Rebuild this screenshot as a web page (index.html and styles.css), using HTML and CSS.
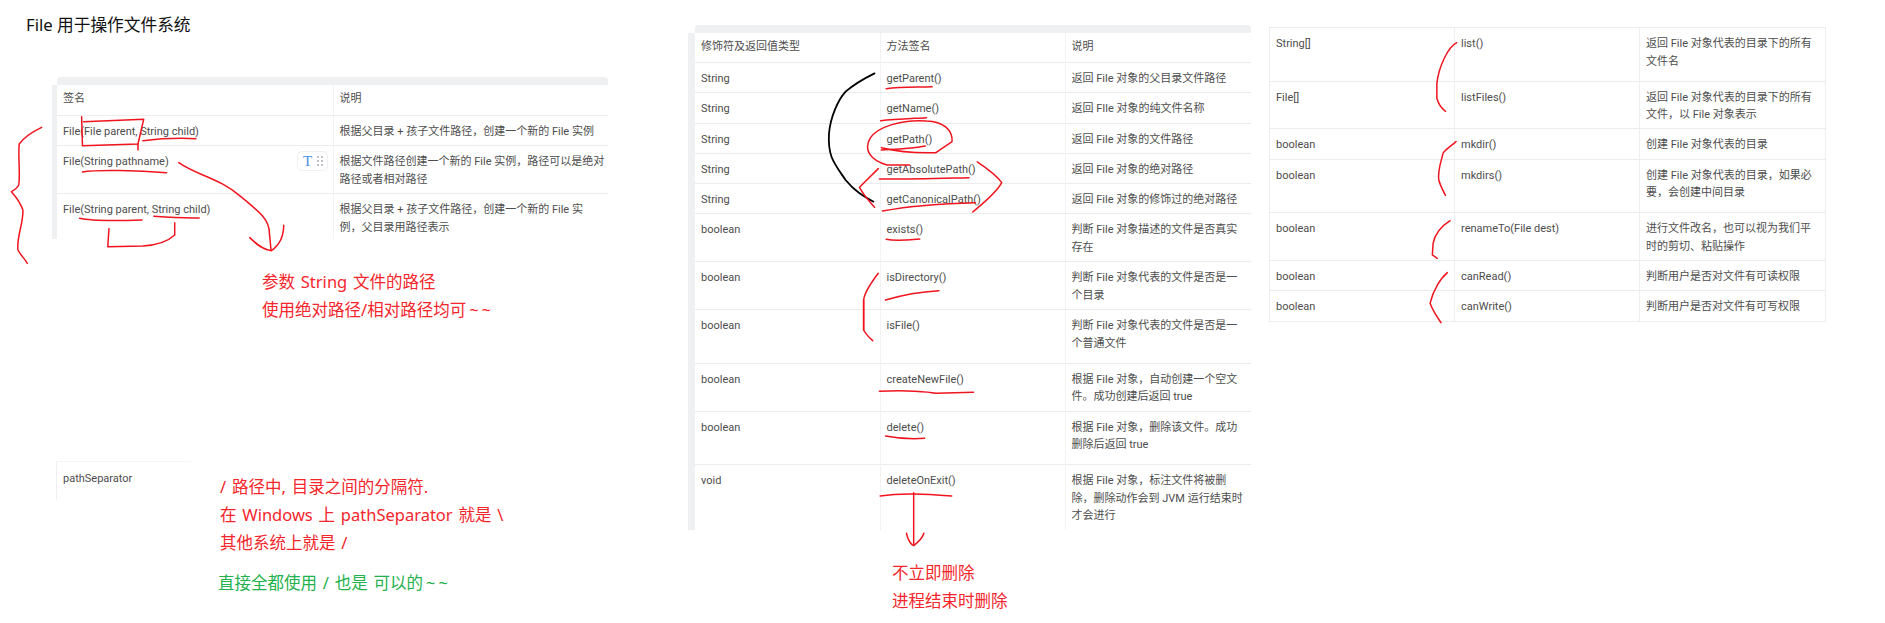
FILE: index.html
```html
<!DOCTYPE html>
<html lang="zh-CN">
<head>
<meta charset="utf-8">
<title>File 用于操作文件系统</title>
<link rel="stylesheet" href="styles.css">
</head>
<body>
<main class="canvas">
  <h1 class="title">File 用于操作文件系统</h1>

  <section class="sheet sheet-ctor">
    <div class="sheet-top"></div>
    <div class="sheet-body">
      <div class="gutter"></div>
      <table class="grid">
        <colgroup><col class="c-276"><col></colgroup>
        <tr class="r-head"><td>签名</td><td>说明</td></tr>
        <tr><td>File(File parent, String child)</td><td>根据父目录 + 孩子文件路径&#xFF0C;创建一个新的 File 实例</td></tr>
        <tr><td>File(String pathname)</td><td>根据文件路径创建一个新的 File 实例&#xFF0C;路径可以是绝对<br>路径或者相对路径</td></tr>
        <tr><td>File(String parent, String child)</td><td>根据父目录 + 孩子文件路径&#xFF0C;创建一个新的 File 实<br>例&#xFF0C;父目录用路径表示</td></tr>
      </table>
    </div>
  </section>

  <div class="block-tool">
    <span class="block-t">T</span>
    <svg class="block-drag" width="6" height="10" viewBox="0 0 6 10"><g fill="#bfc3c9"><rect x="0" y="0" width="2" height="2"/><rect x="4" y="0" width="2" height="2"/><rect x="0" y="4" width="2" height="2"/><rect x="4" y="4" width="2" height="2"/><rect x="0" y="8" width="2" height="2"/><rect x="4" y="8" width="2" height="2"/></g></svg>
  </div>

  <section class="field-snip">pathSeparator</section>

  <section class="sheet sheet-methods">
    <div class="sheet-top"></div>
    <div class="sheet-body">
      <div class="gutter"></div>
      <table class="grid">
        <colgroup><col class="c-185"><col class="c-185"><col></colgroup>
        <tr class="r-head"><td>修饰符及返回值类型</td><td>方法签名</td><td>说明</td></tr>
        <tr><td>String</td><td>getParent()</td><td>返回 File 对象的父目录文件路径</td></tr>
        <tr><td>String</td><td>getName()</td><td>返回 FIle 对象的纯文件名称</td></tr>
        <tr><td>String</td><td>getPath()</td><td>返回 File 对象的文件路径</td></tr>
        <tr><td>String</td><td>getAbsolutePath()</td><td>返回 File 对象的绝对路径</td></tr>
        <tr><td>String</td><td>getCanonicalPath()</td><td>返回 File 对象的修饰过的绝对路径</td></tr>
        <tr><td>boolean</td><td>exists()</td><td>判断 File 对象描述的文件是否真实<br>存在</td></tr>
        <tr><td>boolean</td><td>isDirectory()</td><td>判断 File 对象代表的文件是否是一<br>个目录</td></tr>
        <tr class="r-tall"><td>boolean</td><td>isFile()</td><td>判断 File 对象代表的文件是否是一<br>个普通文件</td></tr>
        <tr><td>boolean</td><td>createNewFile()</td><td>根据 File 对象&#xFF0C;自动创建一个空文<br>件。成功创建后返回 true</td></tr>
        <tr class="r-tall"><td>boolean</td><td>delete()</td><td>根据 File 对象&#xFF0C;删除该文件。成功<br>删除后返回 true</td></tr>
        <tr><td>void</td><td>deleteOnExit()</td><td>根据 File 对象&#xFF0C;标注文件将被删<br>除&#xFF0C;删除动作会到 JVM 运行结束时<br>才会进行</td></tr>
      </table>
    </div>
  </section>

  <section class="sheet-list">
    <table class="grid grid-closed">
      <colgroup><col class="c-185"><col class="c-185"><col></colgroup>
      <tr class="r-tall"><td>String[]</td><td>list()</td><td>返回 File 对象代表的目录下的所有<br>文件名</td></tr>
      <tr><td>File[]</td><td>listFiles()</td><td>返回 File 对象代表的目录下的所有<br>文件&#xFF0C;以 File 对象表示</td></tr>
      <tr><td>boolean</td><td>mkdir()</td><td>创建 File 对象代表的目录</td></tr>
      <tr class="r-tall"><td>boolean</td><td>mkdirs()</td><td>创建 File 对象代表的目录&#xFF0C;如果必<br>要&#xFF0C;会创建中间目录</td></tr>
      <tr><td>boolean</td><td>renameTo(File dest)</td><td>进行文件改名&#xFF0C;也可以视为我们平<br>时的剪切、粘贴操作</td></tr>
      <tr><td>boolean</td><td>canRead()</td><td>判断用户是否对文件有可读权限</td></tr>
      <tr><td>boolean</td><td>canWrite()</td><td>判断用户是否对文件有可写权限</td></tr>
    </table>
  </section>

  <svg class="ink" width="1885" height="623" viewBox="0 0 1885 623" aria-hidden="true">
    <g transform="scale(.4082 .3333)">
      <path d="M200,350 L202,437 L338,432 L352,358 L205,365"/>
      <path d="M338,432 L338,450"/>
      <path d="M350,422 C390,416 440,414 480,416"/>
      <path d="M102,382 C80,395 60,410 47,432 C44,470 50,520 46,555 C42,565 35,570 28,575 C35,585 50,605 56,630 C58,670 40,710 44,750 C50,765 60,775 67,790"/>
      <path d="M202,516 C240,508 340,512 408,518"/>
      <path d="M438,488 C480,525 540,535 590,590 C640,640 660,660 660,700 L664,750"/>
      <path d="M612,713 C630,735 645,750 665,752 C685,735 695,710 695,676"/>
      <path d="M195,655 C230,665 300,662 348,660"/>
      <path d="M377,649 C410,652 450,655 488,654"/>
      <path d="M267,686 L264,740 L350,738 C390,735 415,720 428,705 L428,668"/>
    </g>
    <g transform="translate(680 10) scale(.3763 .3333)">
      <path class="ink-black" d="M517,190 C490,205 460,225 440,245 C420,270 400,320 396,370 C392,440 410,460 440,510 C465,545 490,560 514,575"/>
      <path d="M548,236 C590,228 630,232 670,230"/>
      <path d="M533,332 C570,328 610,326 655,323"/>
      <path d="M535,413 C580,425 630,430 680,428 L723,395 C725,360 700,335 655,333 C590,328 525,350 505,385 C488,420 505,450 550,465 L610,465"/>
      <path d="M535,420 C570,418 620,415 652,408"/>
      <path d="M530,507 C600,508 690,505 768,503"/>
      <path d="M527,476 L477,532 C490,560 505,575 517,592"/>
      <path d="M790,456 C815,475 840,495 855,518 C840,550 800,585 778,606"/>
      <path d="M538,603 C600,590 700,580 785,578"/>
      <path d="M548,688 C575,695 610,690 637,687"/>
      <path d="M527,790 C510,815 490,850 488,870 L488,960"/>
      <path d="M546,870 C590,855 640,845 688,842"/>
    </g>
    <g transform="translate(680 300) scale(.3763 .3333)">
      <path d="M488,0 L488,90 C495,105 505,115 512,122"/>
      <path d="M530,274 C600,270 660,275 680,280 L780,277"/>
      <path d="M546,408 C580,415 620,418 650,415"/>
      <path d="M532,588 C590,578 650,582 722,588"/>
      <path d="M621,578 L621,735"/>
      <path d="M602,700 C605,720 615,735 621,737 C635,725 645,712 648,700"/>
    </g>
    <g transform="translate(1260 10) scale(.3763 .3333)">
      <path d="M523,98 C500,110 475,170 470,220 L470,265 C475,285 485,298 493,304"/>
      <path d="M521,395 C505,410 495,418 487,428 C480,460 472,480 475,510 C480,530 488,545 493,556"/>
      <path d="M505,632 C480,650 465,670 460,700 L458,735 L471,745"/>
      <path d="M498,788 C480,805 460,840 452,880 C460,905 470,920 481,938"/>
    </g>
  </svg>

  <p class="note note-param">参数 String 文件的路径<br>使用绝对路径/相对路径均可<span class="tilde">~~</span></p>
  <p class="note note-sep">/ 路径中, 目录之间的分隔符.<br>在 Windows 上 pathSeparator 就是 \<br>其他系统上就是 /</p>
  <p class="note note-green">直接全都使用 / 也是 可以的<span class="tilde">~~</span></p>
  <p class="note note-exit">不立即删除<br>进程结束时删除</p>
</main>
</body>
</html>
```
FILE: styles.css
```css
* { box-sizing: border-box; }
html, body { margin: 0; padding: 0; background: #fff; }
body {
  font-family: "Noto Sans", "Noto Sans CJK SC", sans-serif;
  overflow: hidden;
}
.canvas {
  position: relative;
  width: 1885px;
  height: 623px;
  overflow: hidden;
}
.title {
  position: absolute;
  left: 26px;
  top: 13px;
  margin: 0;
  font-size: 16.7px;
  line-height: 24px;
  font-weight: 400;
  color: #111;
}

/* pasted screenshots of the doc tables */
.sheet { position: absolute; display: flex; flex-direction: column; overflow: hidden; }
.sheet-ctor { left: 52px; top: 77px; width: 556px; height: 162px; }
.sheet-methods { left: 688px; top: 25px; width: 563px; height: 505px; }
.sheet-list { position: absolute; left: 1269px; top: 25px; width: 557px; }
.sheet-top {
  flex: none;
  height: 8px;
  margin-left: 5px;
  background: #eef0f1;
  border-radius: 4px 4px 0 0;
}
.sheet-methods .sheet-top { margin-left: 7px; }
.sheet-body { flex: 1; display: flex; min-height: 0; }
.gutter { flex: none; width: 5px; background: #eef0f1; }
.sheet-methods .gutter { width: 7px; }

.grid {
  width: 100%;
  flex: 1;
  align-self: flex-start;
  border-collapse: collapse;
  table-layout: fixed;
  font-family: Roboto, "Noto Sans CJK SC", sans-serif;
  font-size: 11px;
  line-height: 17.6px;
  color: #4d4d4d;
}
.grid td {
  padding: 7px 6px 4.7px;
  vertical-align: top;
  border-left: 1px solid #f3f3f3;
  border-top: 1px solid #ececec;
  white-space: nowrap;
}
.grid td:first-child { border-left: 0; }
.grid .r-head td { border-top: 0; padding: 5px 6px 6.4px; }
.sheet-ctor .grid .r-head td { padding-bottom: 7.4px; }
.grid .r-tall td { padding-bottom: 10.4px; }
.c-276 { width: 276px; }
.c-185 { width: 185px; }
.grid-closed { margin-top: 2px; border: 1px solid #eeeeee; }
.grid-closed td { border-left-color: #eeeeee; }

.field-snip {
  position: absolute;
  left: 56px;
  top: 461px;
  width: 135px;
  height: 39px;
  padding: 8px 6px 0;
  border-left: 1px solid #f0f0f0;
  border-top: 1px solid #f5f5f5;
  font-family: Roboto, "Noto Sans CJK SC", sans-serif;
  font-size: 11px;
  line-height: 17.6px;
  color: #4d4d4d;
}

.block-tool {
  position: absolute;
  left: 297px;
  top: 151px;
  width: 31px;
  height: 20px;
  display: flex;
  align-items: center;
  gap: 5px;
  padding-left: 5px;
  background: #fff;
  border: 1px solid #eef0f3;
  border-radius: 5px;
}
.block-t {
  font-family: "Liberation Serif", serif;
  font-size: 15px;
  line-height: 15px;
  color: #4a90e8;
}
.block-drag { display: block; }

/* hand-drawn ink over the screenshots */
.ink { position: absolute; left: 0; top: 0; pointer-events: none; }
.ink path {
  fill: none;
  stroke: #f0141e;
  stroke-width: 1.5px;
  stroke-linecap: round;
  stroke-linejoin: round;
  vector-effect: non-scaling-stroke;
}
.ink .ink-black { stroke: #000; stroke-width: 1.8px; }

.note {
  position: absolute;
  margin: 0;
  font-size: 16.5px;
  line-height: 28px;
  color: #f4262c;
  white-space: nowrap;
  word-spacing: 1.5px;
}
.tilde { letter-spacing: 3px; margin-left: 3px; }
.note-param { left: 262px; top: 268px; }
.note-sep { left: 220px; top: 473px; }
.note-green { left: 218px; top: 569px; color: #22b14c; }
.note-exit { left: 892px; top: 559px; }
```
